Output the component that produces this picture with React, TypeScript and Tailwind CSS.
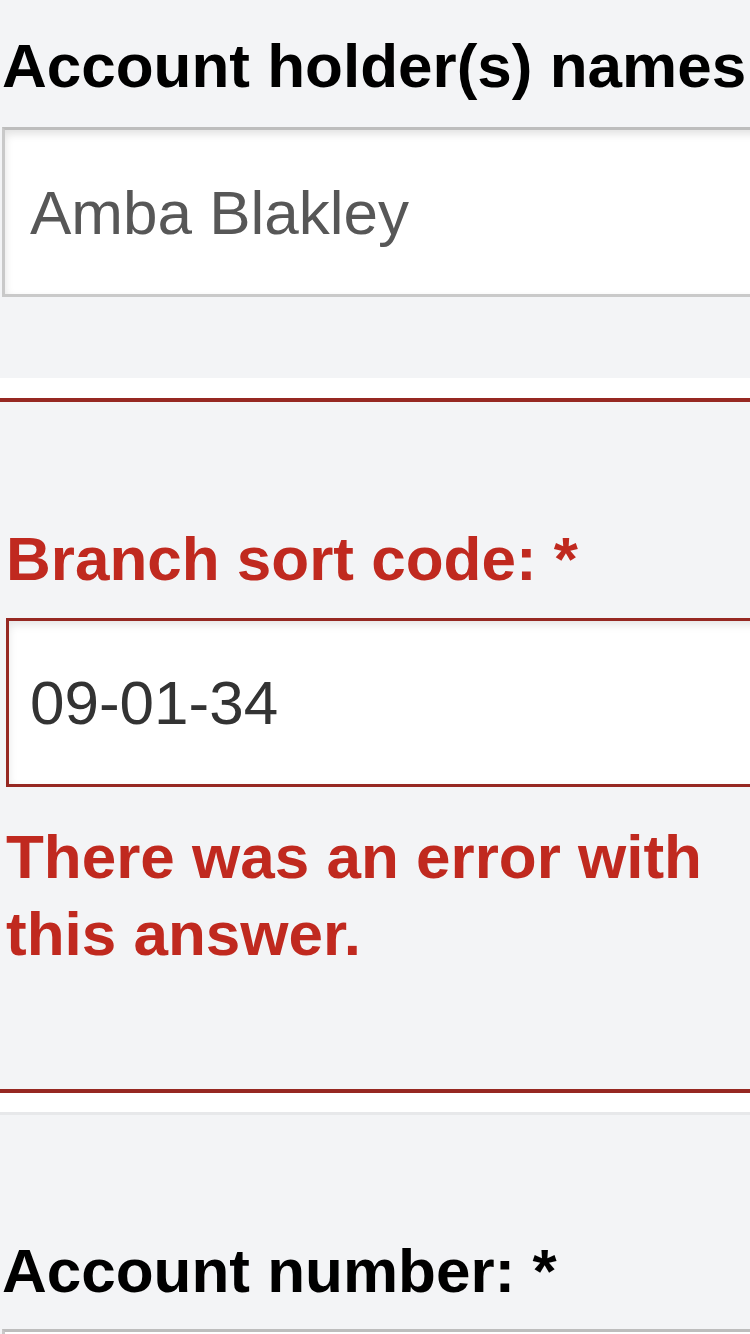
const font = { fontFamily: '"Liberation Sans", Arial, Helvetica, sans-serif' };

export default function App() {
  return (
    <div className="min-h-[1334px] w-[750px] overflow-hidden bg-[#f3f4f6]" style={font}>
      {/* account holder names */}
      <div className="h-[378px] pl-[2px] pt-[30px]">
        <label className="block whitespace-nowrap text-[62px] font-bold leading-[71px] text-black">
          Account holder(s) names
        </label>
        <input
          readOnly
          value="Amba Blakley"
          className="mt-[26px] box-border block h-[170px] w-[800px] border-[3px] border-[#c9c9c9] border-t-[#bdbdbd] bg-white pl-[25px] text-[62px] leading-[71px] text-[#575757] shadow-[inset_0_4px_8px_rgba(0,0,0,0.12)] outline-none"
        />
      </div>

      <div className="h-[20px] bg-white" />

      {/* sort code, with error */}
      <div className="border-y-4 border-[#962822] bg-[#f3f4f6] px-[6px] pb-[117px] pt-[121px]">
        <label className="block whitespace-nowrap text-[62px] font-bold leading-[71px] text-[#c0291f]">
          Branch sort code: *
        </label>
        <input
          readOnly
          value="09-01-34"
          className="mt-[24px] box-border block h-[169px] w-[800px] border-[3px] border-[#962822] bg-white pl-[21px] text-[62px] leading-[71px] text-[#333333] shadow-[inset_0_4px_8px_rgba(0,0,0,0.1)] outline-none"
        />
        <p className="mt-[31px] text-[62px] font-bold leading-[77px] text-[#c0291f]">
          There was an error with this answer.
        </p>
      </div>

      <div className="h-[19px] bg-white" />
      <div className="h-[3px] bg-[#e7e8ea]" />

      {/* account number */}
      <div className="pl-[2px] pt-[120px]">
        <label className="block whitespace-nowrap text-[62px] font-bold leading-[71px] text-black">
          Account number: *
        </label>
        <input
          readOnly
          value=""
          className="mt-[23px] box-border block h-[170px] w-[800px] border-[3px] border-[#c9c9c9] border-t-[#bdbdbd] bg-white text-[62px] outline-none"
        />
      </div>
    </div>
  );
}
